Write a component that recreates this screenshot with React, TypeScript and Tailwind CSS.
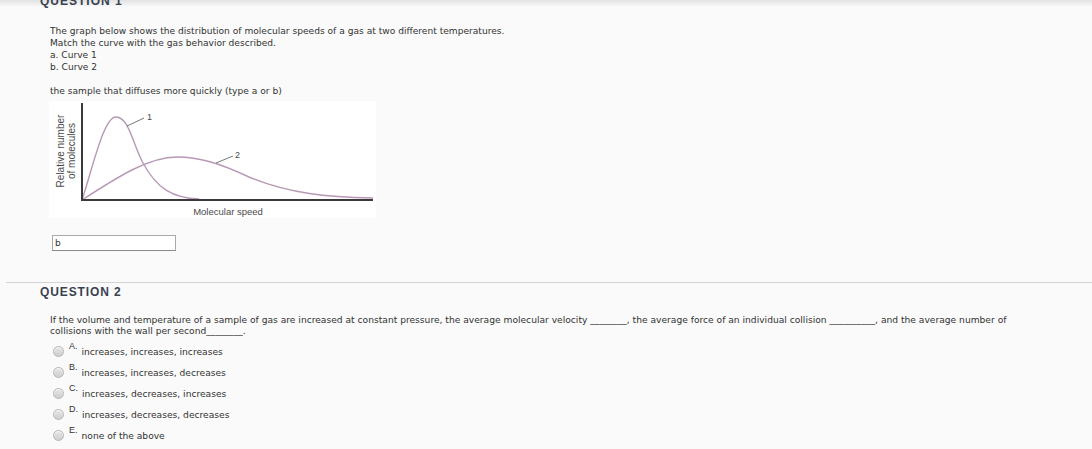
const options = [
  { letter: "A.", text: "increases, increases, increases" },
  { letter: "B.", text: "increases, increases, decreases" },
  { letter: "C.", text: "increases, decreases, increases" },
  { letter: "D.", text: "increases, decreases, decreases" },
  { letter: "E.", text: "none of the above" },
];

function SpeedGraph() {
  return (
    <svg width="327" height="117" viewBox="0 0 327 117" className="block">
      <rect x="0" y="0" width="327" height="117" fill="#ffffff" />
      <g fill="#4a4a4a" fontFamily="'Liberation Sans', Arial, sans-serif" fontSize="10">
        <text transform="translate(15 50) rotate(-90)" textAnchor="middle">
          Relative number
        </text>
        <text transform="translate(26 50) rotate(-90)" textAnchor="middle">
          of molecules
        </text>
        <text x="179" y="114" textAnchor="middle" fontSize="9.5">
          Molecular speed
        </text>
        <text x="98" y="19" fontSize="9">1</text>
        <text x="186" y="57" fontSize="9">2</text>
      </g>
      <g fill="none" stroke="#b899b5" strokeWidth="1.4">
        <path d="M33 99 C 45 62 55 16 67 16 C 80 16 84 44 94 62 C 108 88 124 97 150 98" />
        <path d="M33 99 C 70 75 100 56 128 56 C 150 56 170 62 200 76 C 240 93 280 96 324 97" />
        <path d="M78 25 L 95 17" stroke="#555" strokeWidth="0.8" />
        <path d="M167 62 L 184 55" stroke="#555" strokeWidth="0.8" />
      </g>
      <path d="M33 2 L 33 99 L 324 99" fill="none" stroke="#3a3a3a" strokeWidth="2" />
    </svg>
  );
}

export default function App() {
  return (
    <div className="relative h-[449px] w-full overflow-hidden bg-[#fafafa] text-[#333] font-['DejaVu_Sans',Verdana,sans-serif]">
      <div className="pointer-events-none absolute inset-x-0 top-0 h-[7px] bg-gradient-to-b from-[#e2e2e2] to-[#fafafa]" />

      <section className="pl-10">
        <h2 className="relative mt-[-6px] text-[12px] leading-[14px] font-bold tracking-[1px] text-[#3a4150] font-['Liberation_Sans',Arial,sans-serif]">
          QUESTION 1
        </h2>
        <div className="pl-[10px] pt-[17px] text-[9.1px] leading-[12px]">
          <p>
            The graph below shows the distribution of molecular speeds of a gas at two different temperatures.
          </p>
          <p>Match the curve with the gas behavior described.</p>
          <p>a. Curve 1</p>
          <p>b. Curve 2</p>
          <p className="mt-[12px]">the sample that diffuses more quickly (type a or b)</p>
          <div className="ml-[-1px] mt-[4px]">
            <SpeedGraph />
          </div>
          <div className="ml-[2px] mt-[17px] flex h-[16px] w-[124px] items-center border border-[#a9a9a9] border-b-[#8a8a8a] bg-white pl-[2px] text-[9px]">
            b
          </div>
        </div>
      </section>

      <div className="ml-[6px] mt-[31px] h-px bg-[#d4d4d4]" />

      <section className="pl-10">
        <h2 className="mt-[2px] text-[12px] leading-[14px] font-bold tracking-[0.9px] text-[#3a4150] font-['Liberation_Sans',Arial,sans-serif]">
          QUESTION 2
        </h2>
        <div className="pl-[10px] pt-[16px] text-[9.15px] leading-[11px]">
          <p>
            If the volume and temperature of a sample of gas are increased at constant pressure, the average molecular
            velocity ________, the average force of an individual collision __________, and the average number of
            <br />
            collisions with the wall per second________.
          </p>
          <div className="mt-[8px] flex flex-col gap-[9px] pl-[3px]">
            {options.map((o) => (
              <div key={o.letter} className="flex h-[12px] items-center">
                <span className="h-[11px] w-[11px] rounded-full border border-[#b5b5b5] bg-gradient-to-b from-[#e6e6e6] to-[#cfcfcf] shadow-[inset_0_1px_1px_rgba(255,255,255,0.8)]" />
                <span className="ml-[5px] mt-[-4px] self-start text-[9px] leading-[10px] font-['Liberation_Sans',Arial,sans-serif]">
                  {o.letter}
                </span>
                <span className="ml-[4px] mt-[3px]">{o.text}</span>
              </div>
            ))}
          </div>
        </div>
      </section>
    </div>
  );
}
